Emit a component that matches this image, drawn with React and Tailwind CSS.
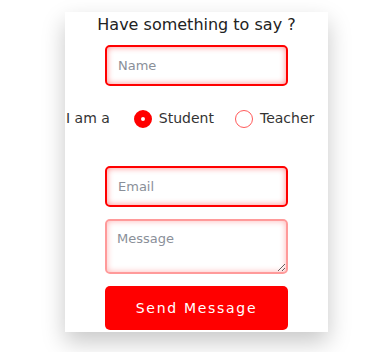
import { useState } from 'react'

export default function App() {
  const [role, setRole] = useState('student')

  const inputCls =
    'w-[183px] h-[41px] rounded-[5px] border-2 border-[#ff0000] px-[11px] text-[13px] text-[#333] placeholder-[#8a8f99] outline-none shadow-[inset_0_0_6px_rgba(255,0,0,0.45)]'

  return (
    <div
      className="w-full h-[352px] bg-white flex justify-center pt-[12px] pl-[2px] overflow-hidden"
      style={{ fontFamily: '"DejaVu Sans", "Liberation Sans", sans-serif' }}
    >
      <div className="w-[263px] h-[320px] bg-white shadow-[0_10px_22px_rgba(0,0,0,0.22)] flex flex-col items-center">
        {/* Title */}
        <h2 className="text-[16px] leading-[24px] font-medium text-[#222] mt-[1px]">
          Have something to say ?
        </h2>

        <input type="text" placeholder="Name" className={`${inputCls} mt-[8px]`} />

        {/* Role */}
        <div className="w-full flex items-center text-[14px] text-[#333] mt-[22px] ml-[2px]">
          <span>I am a</span>
          <label className="flex items-center ml-[24px] cursor-pointer" onClick={() => setRole('student')}>
            <span
              className={`w-[18px] h-[18px] rounded-full ${
                role === 'student' ? 'border-[7px] border-[#ff0000]' : 'border border-[#ff5a5a]'
              }`}
            />
            <span className="ml-[7px]">Student</span>
          </label>
          <label className="flex items-center ml-[21px] cursor-pointer" onClick={() => setRole('teacher')}>
            <span
              className={`w-[18px] h-[18px] rounded-full ${
                role === 'teacher' ? 'border-[7px] border-[#ff0000]' : 'border border-[#ff5a5a]'
              }`}
            />
            <span className="ml-[7px]">Teacher</span>
          </label>
        </div>

        <input type="email" placeholder="Email" className={`${inputCls} mt-[37px]`} />

        <textarea
          placeholder="Message"
          className="w-[183px] h-[55px] mt-[12px] rounded-[5px] border-2 border-[#ff9a9a] px-[10px] py-[8px] text-[13px] text-[#333] placeholder-[#8a8f99] outline-none shadow-[inset_0_0_6px_rgba(255,0,0,0.3)]"
        />

        <button className="w-[183px] h-[44px] mt-[12px] rounded-[5px] bg-[#ff0000] text-white text-[14px] font-medium tracking-[1.7px]">
          Send Message
        </button>
      </div>
    </div>
  )
}
